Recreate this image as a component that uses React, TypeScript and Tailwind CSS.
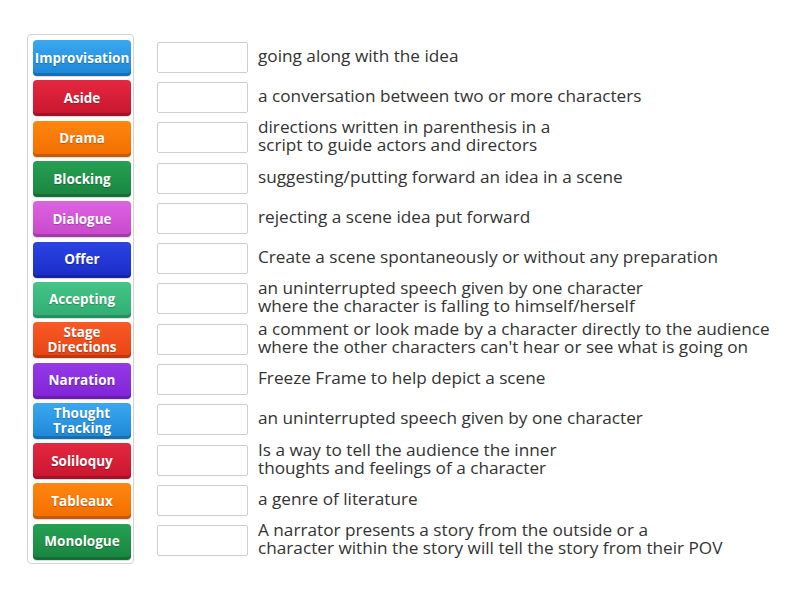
import React from 'react'

interface Tile {
  label: string;
  bg: string;
}

const tiles: Tile[] = [
  { label: 'Improvisation', bg: 'bg-gradient-to-b from-[#3aa8f0] to-[#1c86d6]' },
  { label: 'Aside', bg: 'bg-gradient-to-b from-[#e4283f] to-[#c8152f]' },
  { label: 'Drama', bg: 'bg-gradient-to-b from-[#ff8610] to-[#f26d00]' },
  { label: 'Blocking', bg: 'bg-gradient-to-b from-[#25a152] to-[#1a8440]' },
  { label: 'Dialogue', bg: 'bg-gradient-to-b from-[#dc63e0] to-[#c947cd]' },
  { label: 'Offer', bg: 'bg-gradient-to-b from-[#2b43e3] to-[#1a2cc7]' },
  { label: 'Accepting', bg: 'bg-gradient-to-b from-[#45c488] to-[#2fad72]' },
  { label: 'Stage Directions', bg: 'bg-gradient-to-b from-[#fa5a25] to-[#e64412]' },
  { label: 'Narration', bg: 'bg-gradient-to-b from-[#9638e8] to-[#7f24d6]' },
  { label: 'Thought Tracking', bg: 'bg-gradient-to-b from-[#3aa8f0] to-[#1c86d6]' },
  { label: 'Soliloquy', bg: 'bg-gradient-to-b from-[#e4283f] to-[#c8152f]' },
  { label: 'Tableaux', bg: 'bg-gradient-to-b from-[#ff8610] to-[#f26d00]' },
  { label: 'Monologue', bg: 'bg-gradient-to-b from-[#25a152] to-[#1a8440]' },
]

const definitions: string[][] = [
  ['going along with the idea'],
  ['a conversation between two or more characters'],
  ['directions written in parenthesis in a', 'script to guide actors and directors'],
  ['suggesting/putting forward an idea in a scene'],
  ['rejecting a scene idea put forward'],
  ['Create a scene spontaneously or without any preparation'],
  ['an uninterrupted speech given by one character', 'where the character is falling to himself/herself'],
  ['a comment or look made by a character directly to the audience', 'where the other characters can\'t hear or see what is going on'],
  ['Freeze Frame to help depict a scene'],
  ['an uninterrupted speech given by one character'],
  ['Is a way to tell the audience the inner', 'thoughts and feelings of a character'],
  ['a genre of literature'],
  ['A narrator presents a story from the outside or a', 'character within the story will tell the story from their POV'],
]

const TileButton = ({ tile }: { tile: Tile }) => {
  const words = tile.label.split(' ')
  return (
    <div className="h-[40.3px] flex items-center">
      <div
        className={`w-[98px] h-[36px] rounded-[4px] flex flex-col items-center justify-center text-white font-bold text-[13.5px] leading-[15px] text-center shadow-[inset_0_-3px_0_rgba(0,0,0,0.18),0_1px_1px_rgba(0,0,0,0.15)] [text-shadow:0_1px_1px_rgba(0,0,0,0.25)] ${tile.bg}`}
      >
        {words.length > 1 && tile.label.length > 12
          ? words.map((w) => <span key={w}>{w}</span>)
          : <span>{tile.label}</span>}
      </div>
    </div>
  )
}

export default function App() {
  return (
    <div className="w-[800px] h-[600px] bg-white font-['Open_Sans',sans-serif] pl-[27px] pt-[34px] flex gap-[23px] items-start">
      <div className="border border-[#d4d4d4] rounded-[4px] pl-[5px] pr-[2px] pt-[3px] pb-[1px] flex flex-col">
        {tiles.map((t) => (
          <TileButton key={t.label} tile={t} />
        ))}
      </div>

      <div className="flex flex-col pt-[3px]">
        {definitions.map((lines, i) => (
          <div key={i} className="h-[40.3px] flex items-center gap-[10px]">
            <div className="w-[91px] h-[31px] border border-[#cfcfcf] rounded-[2px] bg-white shrink-0" />
            <div className="text-[17.2px] leading-[18px] text-[#333] whitespace-nowrap -mt-[3px]">
              {lines.map((l) => (
                <div key={l}>{l}</div>
              ))}
            </div>
          </div>
        ))}
      </div>
    </div>
  )
}
